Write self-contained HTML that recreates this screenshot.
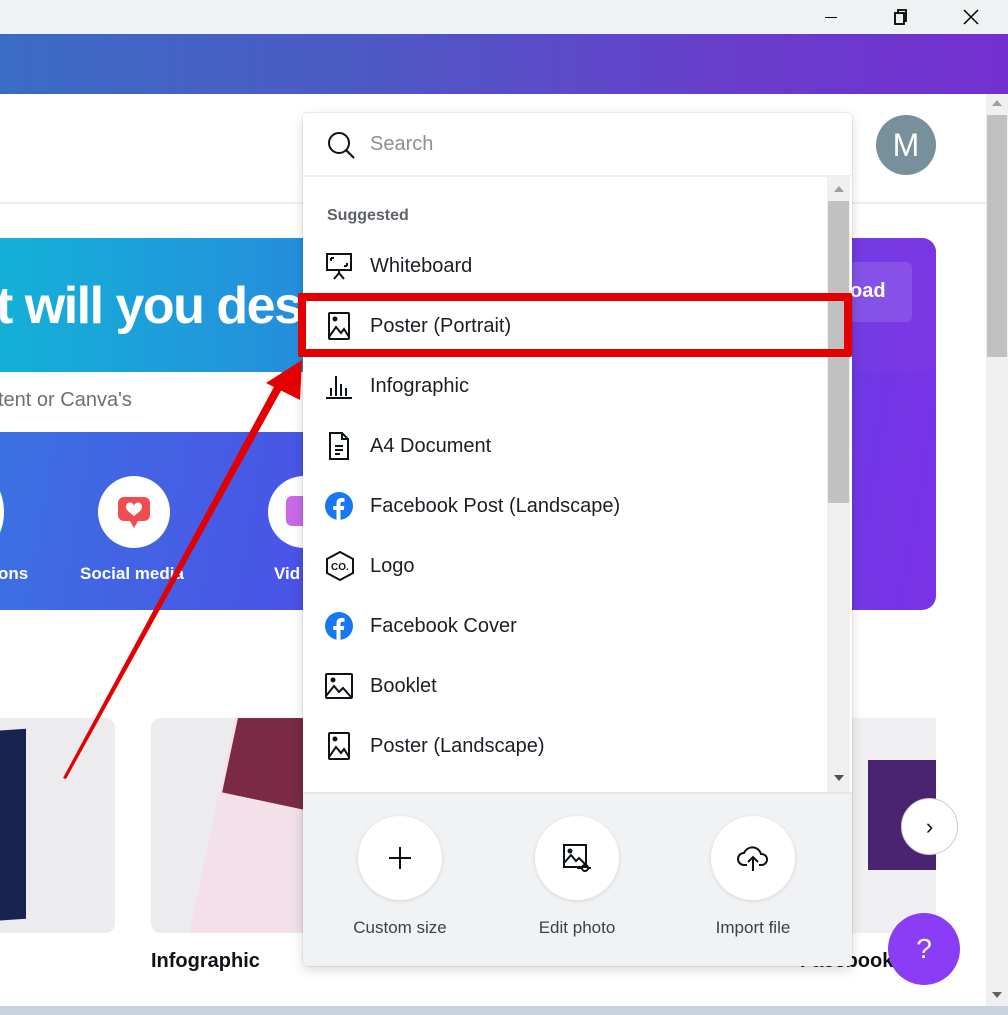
<!DOCTYPE html>
<html><head><meta charset="utf-8"><style>
*{margin:0;padding:0;box-sizing:border-box}
body{width:1008px;height:1015px;overflow:hidden;position:relative;background:#fff;font-family:"Liberation Sans",sans-serif;color:#0e1318}
.abs{position:absolute}
.item{position:absolute;left:0;width:524px;height:60px;display:flex;align-items:center;font-size:20px;color:#1b1f24}
.item svg{position:absolute;left:22px}
.item span{position:absolute;left:67px}
.fc{position:absolute;width:84px;height:84px;border-radius:50%;background:#fff;box-shadow:0 1px 4px rgba(0,0,0,.12);display:flex;align-items:center;justify-content:center}
.fl{position:absolute;font-size:17px;color:#3c4148;width:140px;text-align:center}
</style></head><body>
<!-- title bar -->
<div class="abs" style="left:0;top:0;width:1008px;height:34px;background:#eff2f3"></div>
<div class="abs" style="left:825px;top:17px;width:12px;height:1px;background:#000"></div>
<svg class="abs" style="left:893px;top:8px" width="16" height="18" viewBox="0 0 16 18"><rect x="2" y="5" width="9" height="11" fill="none" stroke="#000" stroke-width="1.8"/><path d="M5 5V2h8v11h-2" fill="none" stroke="#000" stroke-width="1.8"/></svg>
<svg class="abs" style="left:963px;top:9px" width="16" height="16"><path d="M1 1L15 15M15 1L1 15" stroke="#000" stroke-width="1.5"/></svg>
<!-- gradient header -->
<div class="abs" style="left:0;top:34px;width:1008px;height:60px;background:linear-gradient(90deg,#3b6cc3,#4c5ac4 35%,#6a3ccc 75%,#7330d0)"></div>
<!-- page scrollbar -->
<div class="abs" style="left:986px;top:94px;width:22px;height:912px;background:#f0f0f0"></div>
<div class="abs" style="left:987px;top:115px;width:20px;height:242px;background:#c1c1c1"></div>
<div class="abs" style="left:992px;top:100px;border:5px solid transparent;border-bottom:6px solid #a0a0a0;border-top:0"></div>
<div class="abs" style="left:992px;top:992px;border:5px solid transparent;border-top:6px solid #606060;border-bottom:0"></div>
<div class="abs" style="left:0;top:1006px;width:1008px;height:9px;background:#c9d3df"></div>
<!-- header line & avatar -->
<div class="abs" style="left:0;top:202px;width:986px;height:2px;background:#eceef0"></div>
<div class="abs" style="left:876px;top:115px;width:60px;height:60px;border-radius:50%;background:#77909b;color:#fff;font-size:32px;display:flex;align-items:center;justify-content:center">M</div>
<!-- hero -->
<div class="abs" style="left:0;top:238px;width:936px;height:372px;border-radius:0 14px 14px 0;background:linear-gradient(100deg,#3a74e0,#5146ea 50%,#7a33e6);overflow:hidden">
 <div class="abs" style="left:0;top:0;width:936px;height:134px;background:linear-gradient(90deg,#13b1d7,#2d7fdf 45%,#6a43e4 80%,#7b36e4)"></div>
 <div class="abs" style="left:-4px;top:38px;font-size:52px;font-weight:bold;color:#fff;letter-spacing:-1.5px">t will you des</div>
 <div class="abs" style="left:0;top:134px;width:852px;height:60px;background:#fff"></div>
 <div class="abs" style="left:-2px;top:151px;font-size:20px;color:#6b6f76">tent or Canva's</div>
 <div class="abs" style="left:850px;top:24px;width:62px;height:60px;background:rgba(255,255,255,.12);border-radius:6px"></div>
 <div class="abs" style="left:850px;top:42px;font-size:20px;font-weight:bold;color:#fff">oad</div>
 <div class="abs" style="left:-40px;top:238px;width:44px;height:72px;border-radius:50%;background:#fff"></div>
 <div class="abs" style="left:98px;top:238px;width:72px;height:72px;border-radius:50%;background:#fff"></div>
 <svg class="abs" style="left:116px;top:256px" width="36" height="36" viewBox="0 0 36 36"><rect x="2" y="3" width="32" height="24" rx="6" fill="#f04d52"/><path d="M14 27l4 7 4-7z" fill="#f04d52"/><path d="M18 22c-5-4-8-6-8-9a3.5 3.5 0 0 1 8-1 3.5 3.5 0 0 1 8 1c0 3-3 5-8 9z" fill="#fff"/></svg>
 <div class="abs" style="left:268px;top:238px;width:72px;height:72px;border-radius:50%;background:#fff"></div>
 <div class="abs" style="left:286px;top:258px;width:30px;height:30px;border-radius:6px;background:#c869e8"></div>
 <div class="abs" style="left:-2px;top:326px;font-size:17px;font-weight:bold;color:#fff">ons</div>
 <div class="abs" style="left:80px;top:326px;font-size:17px;font-weight:bold;color:#fff">Social media</div>
 <div class="abs" style="left:274px;top:326px;font-size:17px;font-weight:bold;color:#fff">Vid</div>
</div>
<!-- cards -->
<div class="abs" style="left:0;top:718px;width:115px;height:215px;border-radius:0 10px 10px 0;background:#ececee"></div>
<div class="abs" style="left:-10px;top:730px;width:36px;height:190px;background:#16244f;transform:skewY(-4deg)"></div>
<div class="abs" style="left:151px;top:718px;width:160px;height:215px;border-radius:10px;background:#ececee;overflow:hidden">
 <div class="abs" style="left:60px;top:-10px;width:140px;height:260px;background:#f3e0e8;transform:rotate(12deg)"></div>
 <div class="abs" style="left:80px;top:-10px;width:140px;height:100px;background:#7a2a44;transform:rotate(12deg)"></div>
</div>
<div class="abs" style="left:852px;top:718px;width:84px;height:215px;background:#f0f0f2"></div>
<div class="abs" style="left:868px;top:760px;width:68px;height:110px;background:#4a2470"></div>
<div class="abs" style="left:151px;top:950px;font-size:20px;font-weight:bold">Infographic</div>
<div class="abs" style="left:800px;top:950px;font-size:20px;font-weight:bold">Facebook</div>
<div class="abs" style="left:901px;top:798px;width:57px;height:57px;border-radius:50%;background:#fff;border:1px solid #ccc;font-size:22px;display:flex;align-items:center;justify-content:center">›</div>
<div class="abs" style="left:888px;top:913px;width:72px;height:72px;border-radius:50%;background:#8b3df6;color:#fff;font-size:28px;display:flex;align-items:center;justify-content:center">?</div>
<!-- dropdown -->
<div class="abs" style="left:303px;top:113px;width:549px;height:853px;background:#fff;border-radius:4px;box-shadow:0 0 0 1px rgba(0,0,0,.06),0 4px 12px rgba(0,0,0,.15);overflow:hidden">
 <div class="abs" style="left:0;top:0;width:549px;height:64px;border-bottom:2px solid #eef0f2"></div>
 <svg class="abs" style="left:24px;top:18px" width="30" height="30" viewBox="0 0 30 30"><circle cx="12" cy="12" r="10" fill="none" stroke="#0e1318" stroke-width="2"/><path d="M19 19l8 8" stroke="#0e1318" stroke-width="2.2"/></svg>
 <div class="abs" style="left:67px;top:20px;font-size:20px;color:#8a8f98">Search</div>
 <div class="abs" style="left:524px;top:64px;width:23px;height:615px;background:#f0f0f0"></div>
 <div class="abs" style="left:525px;top:88px;width:21px;height:302px;background:#c1c1c1"></div>
 <div class="abs" style="left:531px;top:73px;border:5px solid transparent;border-bottom:6px solid #a0a0a0;border-top:0"></div>
 <div class="abs" style="left:531px;top:662px;border:5px solid transparent;border-top:6px solid #505050;border-bottom:0"></div>
 <div class="abs" style="left:24px;top:94px;font-size:16px;font-weight:bold;color:#5e6269">Suggested</div>
 <div class="item" style="top:123px"><svg width="28" height="28" viewBox="0 0 28 28" fill="none" stroke="#0e1318" stroke-width="2"><rect x="2" y="2" width="24" height="16"/><path d="M6 6v3M6 6h3M22 14v-3M22 14h-3M14 18v3M14 21l-5 6M14 21l5 6"/></svg><span>Whiteboard</span></div>
 <div class="item" style="top:183px"><svg width="28" height="28" viewBox="0 0 28 28" fill="none" stroke="#0e1318" stroke-width="2"><rect x="4" y="1" width="20" height="26" rx="1"/><circle cx="10" cy="7" r="1.5" fill="#0e1318"/><path d="M4 25l7-10 5 6 3-4 5 8"/></svg><span>Poster (Portrait)</span></div>
 <div class="item" style="top:243px"><svg width="28" height="28" viewBox="0 0 28 28" fill="none" stroke="#0e1318" stroke-width="2"><path d="M1 26h26M6 24v-8M11 24V4M16 24V12M21 24v-8"/></svg><span>Infographic</span></div>
 <div class="item" style="top:303px"><svg width="28" height="28" viewBox="0 0 28 28" fill="none" stroke="#0e1318" stroke-width="2"><path d="M5 1h12l6 6v20H5z"/><path d="M17 1v6h6M10 14h8M10 18h8M10 22h5"/></svg><span>A4 Document</span></div>
 <div class="item" style="top:363px"><svg width="28" height="28" viewBox="0 0 28 28"><circle cx="14" cy="14" r="14" fill="#1877f2"/><path d="M15.5 28V18h3.3l.5-4h-3.8v-2.4c0-1.1.4-1.9 2-1.9h2V6.2c-.4 0-1.6-.2-3-.2-3 0-5 1.8-5 5.1V14H8.2v4h3.3v10z" fill="#fff"/></svg><span>Facebook Post (Landscape)</span></div>
 <div class="item" style="top:423px"><svg width="30" height="30" viewBox="0 0 30 30" fill="none" stroke="#0e1318" stroke-width="2"><path d="M15 1l13 7v14l-13 7-13-7V8z"/><text x="6" y="19" font-size="10" font-weight="bold" fill="#0e1318" stroke="none" font-family="Liberation Sans">CO.</text></svg><span>Logo</span></div>
 <div class="item" style="top:483px"><svg width="28" height="28" viewBox="0 0 28 28"><circle cx="14" cy="14" r="14" fill="#1877f2"/><path d="M15.5 28V18h3.3l.5-4h-3.8v-2.4c0-1.1.4-1.9 2-1.9h2V6.2c-.4 0-1.6-.2-3-.2-3 0-5 1.8-5 5.1V14H8.2v4h3.3v10z" fill="#fff"/></svg><span>Facebook Cover</span></div>
 <div class="item" style="top:543px"><svg width="28" height="28" viewBox="0 0 28 28" fill="none" stroke="#0e1318" stroke-width="2"><rect x="1" y="2" width="26" height="24" rx="1"/><circle cx="8" cy="8" r="1.5" fill="#0e1318"/><path d="M1 24l8-10 5 6 4-4 8 9"/></svg><span>Booklet</span></div>
 <div class="item" style="top:603px"><svg width="28" height="28" viewBox="0 0 28 28" fill="none" stroke="#0e1318" stroke-width="2"><rect x="4" y="1" width="20" height="26" rx="1"/><circle cx="10" cy="7" r="1.5" fill="#0e1318"/><path d="M4 25l7-10 5 6 3-4 5 8"/></svg><span>Poster (Landscape)</span></div>
 <div class="abs" style="left:0;top:679px;width:549px;height:174px;background:#f1f2f4;border-top:2px solid #e4e6e9"></div>
 <div class="fc" style="left:55px;top:703px"><svg width="28" height="28"><path d="M14 3v22M3 14h22" stroke="#0e1318" stroke-width="2"/></svg></div>
 <div class="fc" style="left:232px;top:703px"><svg width="32" height="32" viewBox="0 0 32 32" fill="none" stroke="#0e1318" stroke-width="2"><rect x="3" y="3" width="22" height="22"/><circle cx="9" cy="9" r="1.5" fill="#0e1318"/><path d="M3 21l7-8 5 6 3-3 7 7"/><circle cx="24" cy="26" r="3"/><path d="M16 26h5M27 26h3"/></svg></div>
 <div class="fc" style="left:408px;top:703px"><svg width="34" height="30" viewBox="0 0 34 30" fill="none" stroke="#0e1318" stroke-width="2"><path d="M11 22H8a6 6 0 0 1 0-12 9 9 0 0 1 17 1 5.5 5.5 0 0 1 1 11h-3"/><path d="M17 28V14M12 19l5-5 5 5"/></svg></div>
 <div class="fl" style="left:27px;top:805px">Custom size</div>
 <div class="fl" style="left:204px;top:805px">Edit photo</div>
 <div class="fl" style="left:380px;top:805px">Import file</div>
</div>
<!-- red highlight -->
<div class="abs" style="left:298px;top:293px;width:554px;height:64px;border:8px solid #e30000;border-radius:2px"></div>
<svg class="abs" style="left:0;top:0" width="1008" height="1015"><path d="M63 778L66 779L288 378L282 372Z" fill="#e30000"/><path d="M302 360L266 383L300 400Z" fill="#e30000"/></svg>
</body></html>
